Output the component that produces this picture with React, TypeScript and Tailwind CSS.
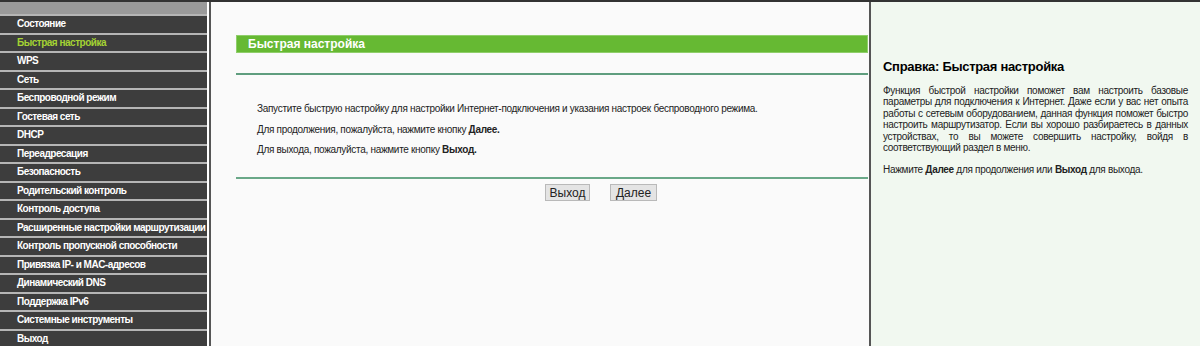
import React from "react";

const menu = [
  "Состояние",
  "Быстрая настройка",
  "WPS",
  "Сеть",
  "Беспроводной режим",
  "Гостевая сеть",
  "DHCP",
  "Переадресация",
  "Безопасность",
  "Родительский контроль",
  "Контроль доступа",
  "Расширенные настройки маршрутизации",
  "Контроль пропускной способности",
  "Привязка IP- и MAC-адресов",
  "Динамический DNS",
  "Поддержка IPv6",
  "Системные инструменты",
  "Выход",
];

export default function App() {
  return (
    <div className="flex h-[346px] w-[1200px] overflow-hidden border-t-2 border-[#333] bg-white font-['Liberation_Sans',Arial,sans-serif]">
      {/* Sidebar */}
      <div className="flex w-[207px] shrink-0 flex-col bg-[#3d3d3d]">
        <div className="h-[14px] shrink-0 border-b-2 border-[#b5b5b5] bg-[#9a9a9a]" />
        {menu.map((item) => (
          <div
            key={item}
            className={`flex h-[18.5px] shrink-0 items-center whitespace-nowrap border-b-2 border-[#b5b5b5] pl-[17px] text-[10px] font-bold leading-none tracking-[-0.5px] ${
              item === "Быстрая настройка" ? "text-[#a4d233]" : "text-white"
            }`}
          >
            {item}
          </div>
        ))}
      </div>

      <div className="w-[2px] shrink-0 bg-white" />

      {/* Main content */}
      <div className="w-[662px] shrink-0 border-l-2 border-r-2 border-[#555] bg-[#fafafa] pl-[25px] pr-[1px]">
        <div className="mt-[33px] flex h-[18px] items-center border border-[#8fce6a] bg-[#66b933] pl-[11px] text-[12px] font-bold text-white">
          Быстрая настройка
        </div>
        <div className="mt-[20px] h-[2px] bg-[#5f9d7e]" />
        <div className="pl-[21px] pt-[26px] text-[10px] tracking-[-0.3px] text-[#222]">
          <p className="h-[20.5px] whitespace-nowrap">
            Запустите быструю настройку для настройки Интернет-подключения и указания настроек беспроводного режима.
          </p>
          <p className="h-[20.5px]">
            Для продолжения, пожалуйста, нажмите кнопку <b>Далее.</b>
          </p>
          <p className="h-[20px]">
            Для выхода, пожалуйста, нажмите кнопку <b>Выход.</b>
          </p>
        </div>
        <div className="mt-[15px] h-[2px] bg-[#6aa888]" />
        <div className="flex gap-[20px] pl-[309px] pt-[5px]">
          <button className="h-[17px] w-[45px] border border-[#b9b9b9] bg-[#e4e4e4] text-[12px] leading-none text-[#222]">
            Выход
          </button>
          <button className="h-[17px] w-[47px] border border-[#b9b9b9] bg-[#e4e4e4] text-[12px] leading-none text-[#222]">
            Далее
          </button>
        </div>
      </div>

      {/* Help */}
      <div className="flex-1 bg-[#f1f8f0] pl-[12px] pr-[12px] pt-[55px] text-[#222]">
        <h2 className="text-[13px] font-bold tracking-[-0.3px] text-black">Справка: Быстрая настройка</h2>
        <p className="mt-[8px] text-justify text-[10px] leading-[11.5px] tracking-[-0.3px]">
          Функция быстрой настройки поможет вам настроить базовые параметры для подключения к Интернет. Даже если у вас нет опыта работы с сетевым оборудованием, данная функция поможет быстро настроить маршрутизатор. Если вы хорошо разбираетесь в данных устройствах, то вы можете совершить настройку, войдя в соответствующий раздел в меню.
        </p>
        <p className="mt-[10px] text-[10px] leading-[11.5px] tracking-[-0.3px]">
          Нажмите <b>Далее</b> для продолжения или <b>Выход</b> для выхода.
        </p>
      </div>
    </div>
  );
}
